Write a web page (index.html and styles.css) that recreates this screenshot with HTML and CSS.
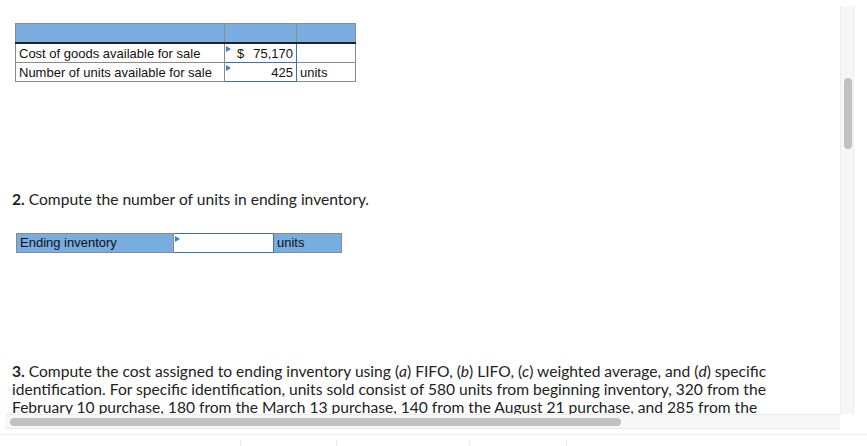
FILE: index.html
```html
<!DOCTYPE html>
<html>
<head>
<meta charset="utf-8">
<link rel="stylesheet" href="styles.css">
</head>
<body>
<div class="page">
  <div class="frame">
    <div class="content">
      <table class="grid top">
        <colgroup><col class="c1"><col class="c2"><col class="c3"></colgroup>
        <tr class="head"><td></td><td></td><td></td></tr>
        <tr>
          <td class="label">Cost of goods available for sale</td>
          <td class="inp"><span class="flag"></span><span class="val"><span>$</span><span>75,170</span></span></td>
          <td></td>
        </tr>
        <tr>
          <td class="label">Number of units available for sale</td>
          <td class="inp"><span class="flag"></span><span class="val"><span>425</span></span></td>
          <td class="unit">units</td>
        </tr>
      </table>

      <p class="q q2"><b>2.</b> Compute the number of units in ending inventory.</p>

      <table class="grid ending">
        <colgroup><col class="e1"><col class="e2"><col class="e3"></colgroup>
        <tr>
          <td class="label">Ending inventory</td>
          <td class="inp blank"><span class="flag"></span></td>
          <td class="unit">units</td>
        </tr>
      </table>

      <p class="q q3"><b>3.</b> Compute the cost assigned to ending inventory using (<i>a</i>) FIFO, (<i>b</i>) LIFO, (<i>c</i>) weighted average, and (<i>d</i>) specific identification. For specific identification, units sold consist of 580 units from beginning inventory, 320 from the February 10 purchase, 180 from the March 13 purchase, 140 from the August 21 purchase, and 285 from the September 5 purchase.</p>
    </div>
    <div class="vbar"><div class="vthumb"></div></div>
    <div class="hbar"><div class="hthumb"></div></div>
    <div class="corner"></div>
  </div>
  <div class="below">
    <span class="tick t1"></span><span class="tick t2"></span><span class="tick t3"></span><span class="tick t4"></span>
  </div>
</div>
</body>
</html>
```
FILE: styles.css
```css
html, body { margin: 0; padding: 0; background: #fff; }
.page { width: 867px; height: 446px; overflow: hidden; position: relative; }
.frame {
  display: grid;
  grid-template-columns: 835px 14px;
  grid-template-rows: 408px 15px;
  margin: 6px 0 0 5px;
}
.content {
  overflow: hidden;
  padding: 17px 0 0 7px;
  font-family: Lato, "Open Sans", sans-serif;
  font-size: 15.6px;
  color: #222;
}
.grid { border-collapse: collapse; table-layout: fixed; font-family: "Liberation Sans", Arial, sans-serif; font-size: 13px; color: #111; }
.grid td { border: 1px solid #8a8a8a; height: 18px; padding: 0 3px; line-height: 18px; white-space: nowrap; position: relative; overflow: visible; }
.top td { height: 16px; line-height: 16px; padding-top: 2px; }
.top { margin-left: 3px; width: 340px; }
.c1 { width: 209px; } .c2 { width: 72px; } .c3 { width: 59px; }
.top .head td { background: #79acdf; border-bottom: 2px solid #222; height: 18px; padding-top: 0; }
.inp { border: 1px solid #3a72b0 !important; }
.val { display: flex; justify-content: flex-end; gap: 5px; padding-left: 9px; }
.val span:first-child:not(:last-child) { flex: 1; }
.flag { position: absolute; left: 1px; top: 2px; width: 0; height: 0; border-top: 3px solid transparent; border-bottom: 3px solid transparent; border-left: 5px solid #3a7fd0; }
.q { margin: 0; line-height: 18px; }
.q2 { margin-top: 108px; }
.ending { margin-left: 4px; margin-top: 25px; width: 325px; }
.e1 { width: 157px; } .e2 { width: 100px; } .e3 { width: 68px; }
.ending td { background: #79acdf; }
.ending td.blank { background: #fff; }
.q3 { margin-top: 109px; width: 792px; }
.vbar { background: #f6f6f6; border-left: 1px solid #ececec; border-right: 1px solid #ececec; }
.vthumb { width: 8px; height: 71px; margin: 72px 0 0 3px; background: #c2c2c2; border-radius: 4px; }
.hbar { background: #f7f7f7; border-top: 1px solid #ebebeb; border-bottom: 1px solid #ebebeb; box-sizing: border-box; }
.hthumb { width: 611px; height: 8px; margin: 3px 0 0 5px; background: #c2c2c2; border-radius: 4px; }
.corner { background: #fff; }
.below { margin-top: 5px; border-top: 1px solid #eeeeee; height: 12px; position: relative; }
.tick { position: absolute; top: 5px; width: 1px; height: 8px; background: #ececec; }
.t1 { left: 240px; } .t2 { left: 336px; } .t3 { left: 469px; } .t4 { left: 566px; }
```
